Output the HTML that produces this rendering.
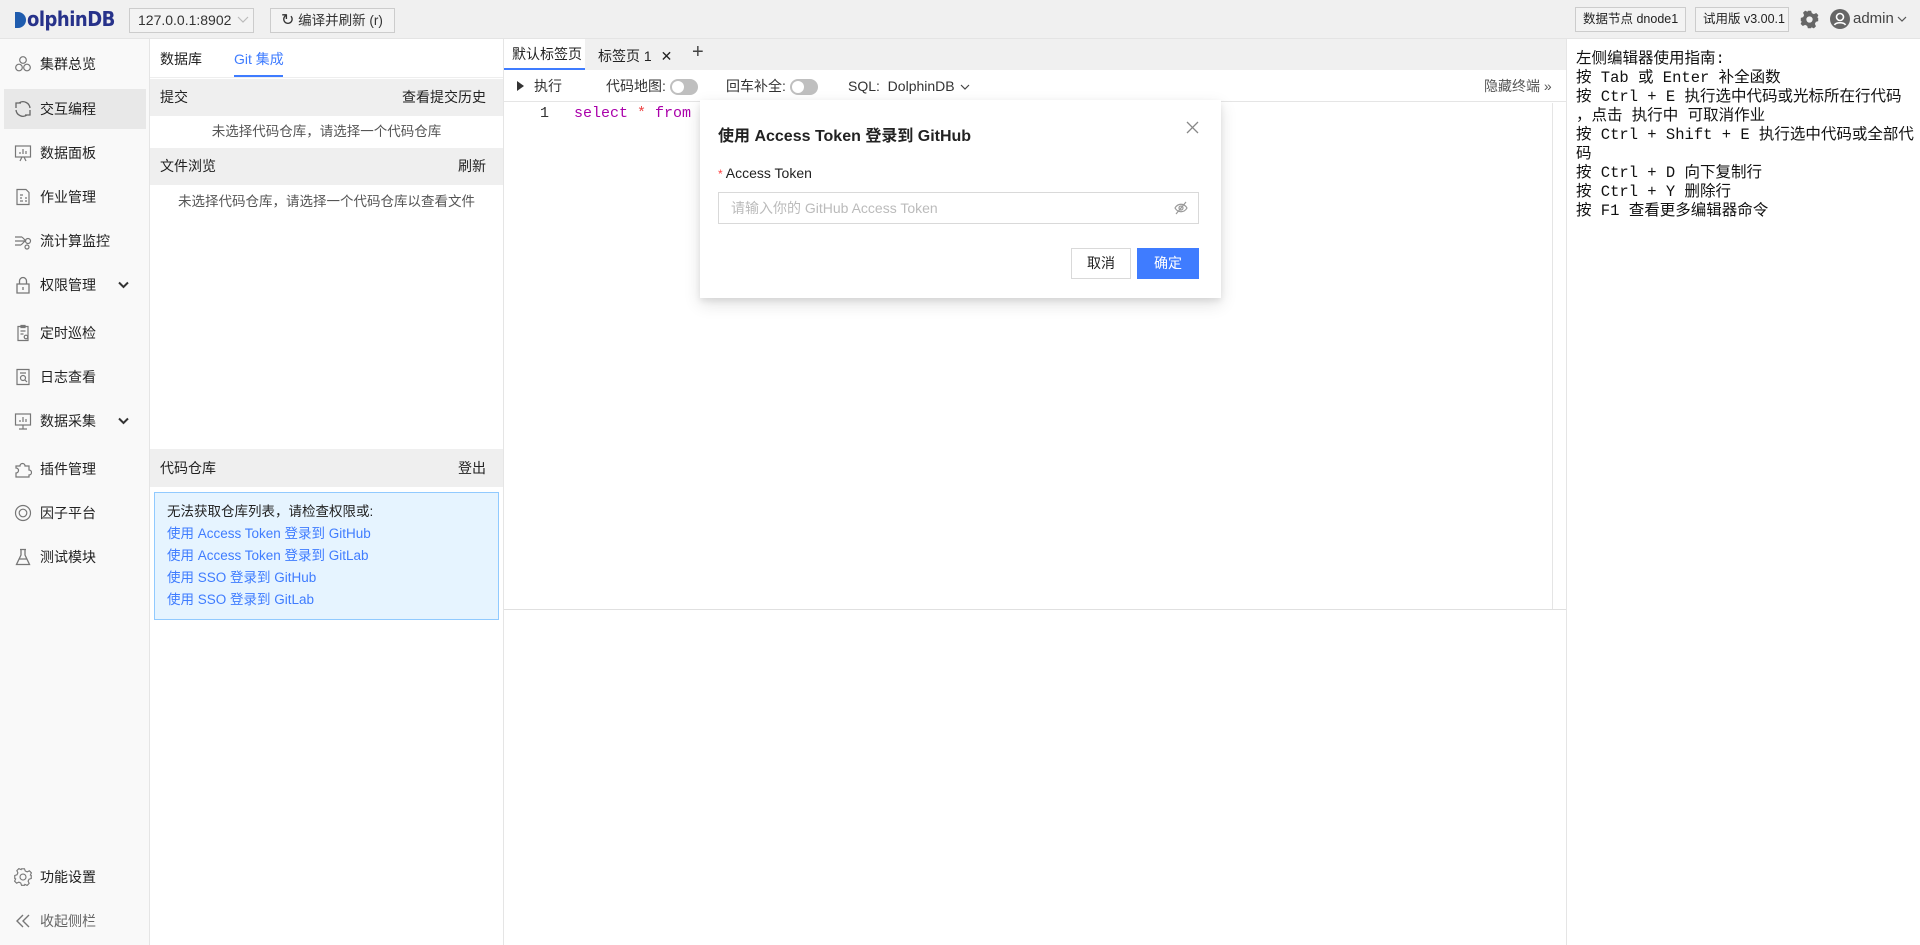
<!DOCTYPE html>
<html><head><meta charset="utf-8"><style>
*{box-sizing:border-box;margin:0;padding:0}
body{width:1920px;height:945px;overflow:hidden;font-family:"Liberation Sans","Noto Sans CJK SC",sans-serif;font-size:14px;color:#222;background:#fff;position:relative}
.a{position:absolute;white-space:nowrap}
.top{left:0;top:0;width:1920px;height:39px;background:#f0f0f0;border-bottom:1px solid #e4e4e4}
.box{border:1px solid #ccc;background:#f3f3f3;height:25px;line-height:23px;font-size:13px;padding-left:8px;white-space:nowrap;overflow:hidden}
.side{left:0;top:39px;width:150px;height:906px;background:#f9f9f9;border-right:1px solid #e5e5e5}
.it{position:absolute;left:4px;width:142px;height:40px;line-height:40px;padding-left:36px;font-size:14px;color:#222}
.it svg{position:absolute;left:10px;top:11px}
.hdr{background:#efefef;height:37px;line-height:37px;padding:0 17px 0 10px;font-size:14px;display:flex;justify-content:space-between}
.muted{color:#555;text-align:center;font-size:13.5px}
.link{color:#3f7cff}
.mono{font-family:"Liberation Mono","Noto Sans CJK SC",monospace}
.tog{display:inline-block;width:28px;height:16px;border-radius:8px;background:#bfbfbf;position:relative;vertical-align:middle}
.tog:after{content:"";position:absolute;left:2px;top:2px;width:12px;height:12px;border-radius:6px;background:#fff}
</style></head><body>
<div class="a top"></div>
<div class="a" style="left:15px;top:7px;font-size:20px;font-weight:bold;color:#27328a;letter-spacing:-0.5px;font-family:'DejaVu Sans Condensed','Liberation Sans',sans-serif"><span style="display:inline-block;width:11px;height:16px;background:#1f5cae;border-radius:0 8px 8px 0;vertical-align:-2px;margin-right:1px"></span>olphinDB</div>
<div class="a box" style="left:129px;top:8px;width:125px;font-size:14px;color:#333">127.0.0.1:8902</div>
<svg class="a" style="left:237px;top:16px" width="12" height="8" viewBox="0 0 12 8" fill="none" stroke="#bbb" stroke-width="1.2"><path d="M1 1l5 5 5-5"/></svg>
<div class="a box" style="left:270px;top:8px;width:125px;padding-left:10px;color:#333;font-size:13.5px"><span style="font-size:16px">↻</span> 编译并刷新 (r)</div>
<div class="a box" style="left:1575px;top:7px;width:111px;font-size:12.5px;padding-left:7px">数据节点 dnode1</div>
<div class="a box" style="left:1695px;top:7px;width:94px;font-size:12.5px;padding-left:7px">试用版 v3.00.1</div>
<svg class="a" style="left:1800px;top:10px" width="19" height="19" viewBox="0 0 24 24"><path fill="#666" d="M10 1h4l1 3 2.5 1.2 3-1.4 2.7 2.7-1.4 3L23 10v4l-3 1-1.2 2.5 1.4 3-2.7 2.7-3-1.4L14 23h-4l-1-3-2.5-1.2-3 1.4-2.7-2.7 1.4-3L1 14v-4l3-1 1.2-2.5-1.4-3 2.7-2.7 3 1.4z"/><circle cx="12" cy="12" r="4" fill="#f0f0f0"/></svg>
<svg class="a" style="left:1830px;top:9px" width="20" height="20" viewBox="0 0 20 20"><circle cx="10" cy="10" r="10" fill="#666"/><circle cx="10" cy="8" r="3.5" fill="none" stroke="#fff" stroke-width="1.6"/><path d="M4.5 16c1.5-3 9.5-3 11 0" fill="none" stroke="#fff" stroke-width="1.6"/></svg>
<div class="a" style="left:1853px;top:10px;font-size:15px;color:#444">admin</div>
<svg class="a" style="left:1897px;top:16px" width="10" height="6" viewBox="0 0 10 6" fill="none" stroke="#555" stroke-width="1.2"><path d="M1 1l4 4 4-4"/></svg>

<div class="a side"></div>
<div class="a" style="left:4px;top:89px;width:142px;height:40px;background:#e8e8e8"></div>
<div class="a" style="top:0;left:0">
<div class="it" style="top:44px"><svg width="18" height="18" viewBox="0 0 18 18" fill="none" stroke="#777" stroke-width="1.2"><circle cx="9" cy="5" r="3.3"/><circle cx="5" cy="12.5" r="3.3"/><circle cx="13" cy="12.5" r="3.3"/></svg>集群总览</div>
<div class="it" style="top:89px"><svg width="18" height="18" viewBox="0 0 18 18" fill="none" stroke="#666" stroke-width="1.3"><path d="M2 8V3h5M16 10v5h-5M5 3a7 7 0 0 1 11 5M13 15A7 7 0 0 1 2 10"/></svg>交互编程</div>
<div class="it" style="top:133px"><svg width="18" height="18" viewBox="0 0 18 18" fill="none" stroke="#777" stroke-width="1.2"><rect x="1.5" y="2" width="15" height="11"/><path d="M6 17l2-4M12 17l-2-4M6 10V8M9 10V5M12 10V7"/></svg>数据面板</div>
<div class="it" style="top:177px"><svg width="18" height="18" viewBox="0 0 18 18" fill="none" stroke="#777" stroke-width="1.2"><path d="M3 1.5h9l3 3v12H3zM6 7h3M6 10h2M6 13h3M11 10h2M11 13h2"/></svg>作业管理</div>
<div class="it" style="top:221px"><svg width="18" height="18" viewBox="0 0 18 18" fill="none" stroke="#777" stroke-width="1.2"><path d="M1 5h7M1 9h10M1 13h6M8 5l4 4M7 13l4-4"/><circle cx="14" cy="9" r="2.5"/><circle cx="13" cy="15" r="2"/></svg>流计算监控</div>
<div class="it" style="top:265px"><svg width="18" height="18" viewBox="0 0 18 18" fill="none" stroke="#777" stroke-width="1.3"><path d="M3 8h12v9H3zM5.5 8V5a3.5 3.5 0 0 1 7 0v3M9 11v3"/></svg>权限管理<svg style="left:114px;top:16px" width="11" height="8" viewBox="0 0 11 8" fill="none" stroke="#333" stroke-width="2"><path d="M1 1.5l4.5 4.5 4.5-4.5"/></svg></div>
<div class="it" style="top:313px"><svg width="18" height="18" viewBox="0 0 18 18" fill="none" stroke="#777" stroke-width="1.2"><path d="M4 2.5h10v14H4zM7 1.5h4v2H7zM6.5 7h5M6.5 10h3"/><circle cx="12" cy="13" r="1.8"/></svg>定时巡检</div>
<div class="it" style="top:357px"><svg width="18" height="18" viewBox="0 0 18 18" fill="none" stroke="#777" stroke-width="1.2"><path d="M3 1.5h12v15H3zM6 5h6"/><circle cx="9" cy="10" r="2.5"/><path d="M11 12l2 2"/></svg>日志查看</div>
<div class="it" style="top:401px"><svg width="18" height="18" viewBox="0 0 18 18" fill="none" stroke="#777" stroke-width="1.2"><rect x="1.5" y="2" width="15" height="11"/><path d="M5 17h8M9 13v4M6 10V8M9 10V5M12 10V7"/></svg>数据采集<svg style="left:114px;top:16px" width="11" height="8" viewBox="0 0 11 8" fill="none" stroke="#333" stroke-width="2"><path d="M1 1.5l4.5 4.5 4.5-4.5"/></svg></div>
<div class="it" style="top:449px"><svg width="18" height="18" viewBox="0 0 18 18" fill="none" stroke="#777" stroke-width="1.2"><path d="M2 6h4a2.5 2.5 0 1 1 5 0h4v4a2.5 2.5 0 1 1 0 5v2H2v-4a2.5 2.5 0 1 0 0-5z"/></svg>插件管理</div>
<div class="it" style="top:493px"><svg width="18" height="18" viewBox="0 0 18 18" fill="none" stroke="#777" stroke-width="1.2"><circle cx="9" cy="9" r="7.5"/><circle cx="9" cy="9" r="3.8"/></svg>因子平台</div>
<div class="it" style="top:537px"><svg width="18" height="18" viewBox="0 0 18 18" fill="none" stroke="#777" stroke-width="1.3"><path d="M6 1.5h6M7 2v5l-4.5 9.5h13L11 7V2M5 11h8"/></svg>测试模块</div>
<div class="it" style="top:857px"><svg width="18" height="18" viewBox="0 0 24 24" fill="none" stroke="#777" stroke-width="1.5"><path d="M10 1h4l1 3 2.5 1.2 3-1.4 2.7 2.7-1.4 3L23 10v4l-3 1-1.2 2.5 1.4 3-2.7 2.7-3-1.4L14 23h-4l-1-3-2.5-1.2-3 1.4-2.7-2.7 1.4-3L1 14v-4l3-1 1.2-2.5-1.4-3 2.7-2.7 3 1.4z"/><circle cx="12" cy="12" r="4"/></svg>功能设置</div>
<div class="it" style="top:901px;color:#666"><svg width="18" height="18" viewBox="0 0 18 18" fill="none" stroke="#777" stroke-width="1.4"><path d="M9 3L3 9l6 6M15 3L9 9l6 6"/></svg>收起侧栏</div>
</div>

<!-- left panel -->
<div class="a" style="left:150px;top:39px;width:354px;height:906px;border-right:1px solid #e5e5e5;white-space:normal">
<div style="height:39px;position:relative;border-bottom:1px solid #eee">
<span class="a" style="left:10px;top:10px">数据库</span>
<span class="a" style="left:84px;top:10px;color:#3f7cff">Git 集成</span>
<div class="a" style="left:84px;top:36px;width:49px;height:2px;background:#3f7cff"></div></div>
<div class="hdr" style="margin-top:1px"><span>提交</span><span>查看提交历史</span></div>
<div class="muted" style="height:32px;line-height:32px">未选择代码仓库，请选择一个代码仓库</div>
<div class="hdr"><span>文件浏览</span><span>刷新</span></div>
<div class="muted" style="height:32px;line-height:32px;margin-top:1px">未选择代码仓库，请选择一个代码仓库以查看文件</div>
<div class="hdr a" style="left:0;top:410px;width:353px;height:38px;line-height:38px"><span>代码仓库</span><span>登出</span></div>
<div class="a" style="left:4px;top:453px;width:345px;height:128px;background:#e6f4ff;border:1px solid #91caff;padding:8px 12px;line-height:22px;font-size:13.5px">无法获取仓库列表，请检查权限或:<br><span class="link">使用 Access Token 登录到 GitHub</span><br><span class="link">使用 Access Token 登录到 GitLab</span><br><span class="link">使用 SSO 登录到 GitHub</span><br><span class="link">使用 SSO 登录到 GitLab</span></div>
</div>

<!-- editor -->
<div class="a" style="left:504px;top:39px;width:1062px;height:31px;background:#f0f0f0"></div>
<div class="a" style="left:504px;top:39px;width:81px;height:31px;background:#fff;border-bottom:2px solid #3f7cff;line-height:30px;padding-left:8px;font-size:14px">默认标签页</div>
<div class="a" style="left:598px;top:46px;font-size:14px">标签页 1 <span style="margin-left:5px">✕</span></div>
<div class="a" style="left:692px;top:41px;font-size:20px;color:#444">+</div>
<div class="a" style="left:504px;top:70px;width:1062px;height:32px;border-bottom:1px solid #e5e5e5;font-size:14px;line-height:32px;color:#333">
<svg class="a" style="left:13px;top:11px" width="7" height="10" viewBox="0 0 7 10"><path d="M0 0l7 5-7 5z" fill="#333"/></svg><span class="a" style="left:30px">执行</span>
<span class="a" style="left:102px">代码地图: <span class="tog"></span></span>
<span class="a" style="left:222px">回车补全: <span class="tog"></span></span>
<span class="a" style="left:344px">SQL:&nbsp; DolphinDB</span>
<svg class="a" style="left:456px;top:14px" width="10" height="6" viewBox="0 0 10 6" fill="none" stroke="#444" stroke-width="1.2"><path d="M1 1l4 4 4-4"/></svg>
<span class="a" style="left:980px;color:#555">隐藏终端 »</span></div>
<div class="a" style="left:1552px;top:103px;width:1px;height:507px;background:#e5e5e5"></div>
<div class="a" style="left:504px;top:609px;width:1062px;height:1px;background:#e0e0e0"></div>
<div class="a mono" style="left:540px;top:105px;font-size:15px;color:#333">1</div>
<div class="a mono" style="left:574px;top:105px;font-size:15px;color:#a0a"><span>select</span> <span style="color:#e44">*</span> from :</div>

<!-- right -->
<div class="a" style="left:1566px;top:39px;width:1px;height:906px;background:#e5e5e5"></div>
<div class="a mono" style="left:1576px;top:50px;font-size:15.5px;line-height:19px;color:#111;width:340px">左侧编辑器使用指南:<br>按 Tab 或 Enter 补全函数<br>按 Ctrl + E 执行选中代码或光标所在行代码<br>，点击 执行中 可取消作业<br>按 Ctrl + Shift + E 执行选中代码或全部代<br>码<br>按 Ctrl + D 向下复制行<br>按 Ctrl + Y 删除行<br>按 F1 查看更多编辑器命令</div>

<!-- modal -->
<div class="a" style="left:700px;top:100px;width:521px;height:198px;background:#fff;box-shadow:0 6px 16px rgba(0,0,0,.12),0 3px 6px rgba(0,0,0,.08)">
<div class="a" style="left:18px;top:22px;font-size:16px;font-weight:bold;color:#222">使用 Access Token 登录到 GitHub</div>
<svg class="a" style="left:486px;top:21px" width="13" height="13" viewBox="0 0 13 13" stroke="#888" stroke-width="1.3"><path d="M1 1l11 11M12 1L1 12"/></svg>
<div class="a" style="left:18px;top:65px;font-size:14px"><span style="color:#f44;font-size:12px">*</span> Access Token</div>
<div class="a" style="left:18px;top:92px;width:481px;height:32px;border:1px solid #d9d9d9;line-height:30px;padding-left:12px;color:#bbb;font-size:14px">请输入你的 GitHub Access Token
<svg class="a" style="right:10px;top:8px" width="14" height="14" viewBox="0 0 14 14" fill="none" stroke="#999" stroke-width="1.2"><path d="M1 7c3-5 9-5 12 0c-3 5-9 5-12 0z"/><circle cx="7" cy="7" r="2"/><path d="M2 13L12 1"/></svg></div>
<div class="a" style="left:371px;top:148px;width:60px;height:31px;border:1px solid #d9d9d9;text-align:center;line-height:29px;font-size:14px">取消</div>
<div class="a" style="left:437px;top:148px;width:62px;height:31px;background:#3f7cff;color:#fff;text-align:center;line-height:31px;font-size:14px">确定</div>
</div>
</body></html>
